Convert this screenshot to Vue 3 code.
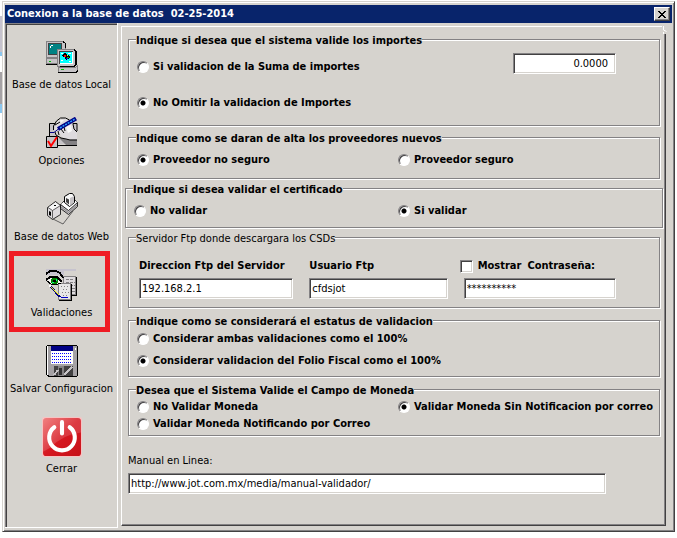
<template>
  <div class="desktop">
    <div class="behind"></div>
    <div class="window">
      <header class="titlebar">
        <h1>Conexion a la base de datos&nbsp; 02-25-2014</h1>
        <button type="button" class="close" aria-label="Cerrar ventana">
          <svg viewBox="0 0 8 7" width="8" height="7" shape-rendering="crispEdges">
            <path d="M0 0h2v1h1v1h2V1h1V0h2v1H7v1H6v1H5v1h1v1h1v1h1v1H6V6H5V5H3v1H2v1H0V6h1V5h1V4h1V3H2V2H1V1H0z" />
          </svg>
        </button>
      </header>

      <div class="content">
        <nav class="sidebar">
          <button v-for="item in menu" :key="item.id" type="button" class="menu-item"
            :class="[item.id, { active: section === item.id }]" @click="section = item.id">
            <!-- computadoras -->
            <svg v-if="item.id === 'local'" class="icon" viewBox="0 0 32 32" shape-rendering="crispEdges">
              <path fill="#c6c3c6" stroke="#848284" d="M.5.5h17l2 2v14h-19z" />
              <path fill="#424142" d="M2 2h14v12H2z" />
              <path fill="#008284" d="M3 3h12v10H3z" />
              <path fill="#fff" d="M5 4h2v1H5zM4 5h1v2H4z" />
              <path fill="#c6c3c6" stroke="#848284" d="M.5 17.500h14v5H.5z" />
              <path fill="#000" d="M0 23h12v1H0zM17 0h1v1h1v1h1v5h-1V2h-2z" />
              <path fill="#00c300" d="M3 20h2v1H3z" />
              <path fill="#c6c3c6" stroke="#848284" d="M11.500 8.500h17l2 2v13l-2 2h-17z" />
              <path fill="#000" d="M28 8h1v1h1v1h1v14h-1v1h-1v1H14v-1h14v-1h1V10h-1z" />
              <path fill="#424142" d="M13 10h14v13H13z" />
              <path fill="#fff" d="M14 22h13v1H14zM26 11h1v12h-1z" />
              <path fill="#00ffff" d="M14 11h12v11H14z" />
              <path fill="#fff" d="M15 19h2v1h-2zM23 20h2v1h-2zM15 12h2v1h-2zM22 12h3v1h-3z" />
              <path fill="#000" d="M17 13h1v-1h2v1h1v1h2v1h1v2h-1v1h-2v1h-1v-1h-1v-2h-2v-1h-1v-1h1z" />
              <path fill="#f00" d="M18 14h2v2h-2z" /><path fill="#00f" d="M20 17h2v1h-2z" />
              <path fill="#ff0" d="M21 14h1v1h-1z" /><path fill="#00c300" d="M21 16h2v1h-2z" />
              <path fill="#c6c3c6" stroke="#848284" d="M12.500 26.500h17l2-2v5l-2 2h-17z" />
              <path fill="#000" d="M12 31h18v-1h1v-1h1v2h-1v1H12z" />
              <path fill="#00c300" d="M15 28h3v1h-3z" />
            </svg>
            <!-- mano con pluma -->
            <svg v-else-if="item.id === 'opciones'" class="icon" viewBox="0 0 32 32">
              <path fill="#c6c3c6" stroke="#000" d="M10 6.500H3.500V20M26 6.500h5V14" />
              <path fill="#c6c3c6" d="M4 7h6v13H4zM26 7h4v7h-4zM11 21h20v6H11z" />
              <path fill="#848284" d="M12 20l10 3h9v5H20z" />
              <path fill="#000" d="M12 28h19v1H12z" />
              <path fill="#dedbde" d="M8 13l1-6 4-4 5-2 6 2 3 4 1 6 3 2v7h-9l-6-2-4-5z" />
              <path fill="none" stroke="#000" d="M7.500 13V9l3-5 4-3h5l4 2M27 7l1 5 3 3M9 15l1 3 5 3 5 1 4 1h7" />
              <path fill="none" stroke="#000" d="M12 14l1 4M15 12l3 4M18 10l1 4M9 8l5-3" />
              <path fill="#f7f7f7" d="M20 10l5-2 1 6-4 2zM14 3h4l-3 3z" />
              <path stroke="#000084" stroke-width="4" d="M12 12L30 1.500" />
              <path stroke="#29a2ff" stroke-width="1.500" stroke-dasharray="2 1" d="M14 11L29 2" />
              <path stroke="#000084" d="M4 15.500h4l5-4" fill="none" />
              <path fill="#c6c3c6" stroke="#000" d="M.5 19.500h11v11H.5z" />
              <path fill="none" stroke="#f00" stroke-width="2" d="M2 24l3 5 6-9" />
            </svg>
            <!-- equipos enlazados -->
            <svg v-else-if="item.id === 'web'" class="icon" viewBox="0 0 32 32">
              <path fill="#dedbde" stroke="#000" stroke-width=".8" d="M1.500 14.500l8-6 5 4v9l-8 5-5-4z" />
              <path fill="#f7f7f7" d="M2.500 14.500l7-5 4 3-7 4.500z" />
              <path fill="none" stroke="#424142" stroke-width=".8" d="M6.500 17.500v8M2 14.500l4.500 3 8-5" />
              <path fill="#000" d="M3 18l2 1v4l-2-1zM8 12h2v1H8z" />
              <path fill="#c6c3c6" stroke="#000" stroke-width=".8" d="M14.500 11.500l4-4h11l2 2v4l-9 8-8-6z" />
              <path fill="#fff" d="M15 11l4-3h11l1 2-8.500 7.500z" />
              <path fill="none" stroke="#000" stroke-width=".8" d="M14.500 11.500l8 6 9-8" />
              <path fill="none" stroke="#848284" d="M15 14l7.500 5.500L31 12" />
              <path fill="#f7f7f7" stroke="#000" d="M18.500 3.500l5-3h3l2 3v6l-5 4-5-4z" />
              <path fill="#c6c3c6" d="M24 5l4-2v6l-4 4z" />
              <path fill="#424142" d="M20 5l3 1.500v5L20 9z" />
              <path fill="none" stroke="#424142" stroke-width=".8" d="M7 26l10 5 10-13" />
            </svg>
            <!-- ojo y documentos -->
            <svg v-else-if="item.id === 'validaciones'" class="icon" viewBox="0 0 32 32" shape-rendering="crispEdges">
              <path fill="#c6c3ce" d="M0 0h30v2H18v4H0z" />
              <path fill="#dedbde" stroke="#848284" d="M17.500 7.500h12v18h-12z" />
              <path fill="#000" d="M30 8h1v19h-6v-1h5z" />
              <path stroke="#848284" stroke-dasharray="3 1" d="M20 10.500h8M20 13.500h9M24 16.500h5M26 19.500h3M26 22.500h3" />
              <path fill="#e7e7e7" stroke="#848284" d="M12.500 14.500h12v16h-12z" />
              <path fill="#000" d="M25 15h1v17H13v-1h12z" />
              <path stroke="#848284" stroke-dasharray="1 2" d="M15 17.500h8M17 20.500h6M16 23.500h7M17 26.500h6" />
              <path fill="#f7f7f7" d="M1 12l4-3h6l5 4-4 2H5z" />
              <path fill="#008200" d="M6 9h5v1h1v4h-1v1H6v-1H5v-4h1z" />
              <path fill="#000" d="M7 11h3v2H7z" /><path fill="#00ff84" d="M10 10h1v2h-1zM6 13h2v1H6z" />
              <path fill="none" stroke="#000" stroke-width="2" d="M0 5l4-3h6l4 2 3 5M0 11l4-3h7l5 5" />
              <path fill="none" stroke="#000" d="M1 12l4 3h7l3-1" />
              <path stroke="#000084" stroke-width="2" d="M4 17l10 11" />
              <path stroke="#ffff00" d="M4 17l9 9" />
              <path fill="#fff" d="M3 16h2v2H3z" />
              <path fill="#0000c6" d="M15 28h7v1h-7z" />
            </svg>
            <!-- disquete -->
            <svg v-else-if="item.id === 'salvar'" class="icon" viewBox="0 0 32 32" shape-rendering="crispEdges">
              <path d="M1 0h30v1h1v30h-1v1H2v-1H1v-1H0V1h1z" />
              <path fill="#a5a2a5" d="M1 1h30v30H3v-1H1z" />
              <path fill="#000084" d="M5 1h22v5H5z" /><path fill="#fff" d="M5 6h22v13H5z" />
              <path stroke="#0000ff" stroke-dasharray="1 1" d="M6 8.500h20M6 11.500h20M6 14.500h20M6 17.500h20" />
              <path fill="#fff" d="M1 1h1v29H1zM29 3h1v2h-1z" />
              <path fill="#424142" d="M8 21h19v10H8z" />
              <path fill="#848284" d="M12 21h6v10h-6z" />
              <path fill="#313031" d="M13 23h3v7h-3z" />
              <path stroke="#c6c3c6" stroke-width="2" d="M8 30l4-5M18 30l8-8" />
            </svg>
            <!-- apagar -->
            <svg v-else class="icon" viewBox="0 0 39 39">
              <defs>
                <linearGradient id="power" x1="0" y1="0" x2="1" y2="1">
                  <stop offset="0" stop-color="#ef6b6b" /><stop offset=".5" stop-color="#d61821" />
                  <stop offset="1" stop-color="#c61018" />
                </linearGradient>
              </defs>
              <rect width="39" height="39" rx="2" fill="#f7c3c3" />
              <rect x="1" y="1" width="37" height="37" rx="3" fill="url(#power)" />
              <path fill="#fff" opacity=".15" d="M1 1h37v14Q20 17 8 30L1 34z" />
              <path fill="none" stroke="#fff" stroke-width="4" stroke-linecap="round"
                d="M12 10a12.500 12.500 0 1 0 15 0M19.500 5v11" />
            </svg>
            <span>{{ item.label }}</span>
          </button>
        </nav>

        <main class="panel">
          <svg class="grip" viewBox="0 0 6 8" width="6" height="8">
            <path fill="#d6d3ce" d="M0 0h6v8H0z" />
            <path fill="none" stroke="#fff" d="M1.500 0v4l3 1.500M1.500 8V6" />
          </svg>

          <fieldset class="group importes">
            <legend>Indique si desea que el sistema valide los importes</legend>
            <div class="importe-row">
              <label><input v-model="importes" type="radio" value="si" />Si validacion de la Suma de importes</label>
              <input v-model="monto" class="field monto" type="text" aria-label="Importe" />
            </div>
            <label><input v-model="importes" type="radio" value="no" />No Omitir la validacion de Importes</label>
          </fieldset>

          <fieldset class="group proveedores">
            <legend>Indique como se daran de alta los proveedores nuevos</legend>
            <div class="options">
              <label><input v-model="proveedor" type="radio" value="no" />Proveedor no seguro</label>
              <label><input v-model="proveedor" type="radio" value="si" />Proveedor seguro</label>
            </div>
          </fieldset>

          <fieldset class="group certificado">
            <legend>Indique si desea validar el certificado</legend>
            <div class="options">
              <label><input v-model="certificado" type="radio" value="no" />No validar</label>
              <label><input v-model="certificado" type="radio" value="si" />Si validar</label>
            </div>
          </fieldset>

          <fieldset class="group ftp">
            <legend>Servidor Ftp donde descargara los CSDs</legend>
            <div class="ftp-grid">
              <div class="ftp-col">
                <label for="servidor">Direccion Ftp del Servidor</label>
                <input id="servidor" v-model="servidor" class="field" type="text" />
              </div>
              <div class="ftp-col">
                <label for="usuario">Usuario Ftp</label>
                <input id="usuario" v-model="usuario" class="field" type="text" />
              </div>
              <div class="ftp-col">
                <div class="clave-row">
                  <label><input v-model="mostrar" type="checkbox" />Mostrar</label>
                  <label for="clave">Contraseña:</label>
                </div>
                <input id="clave" v-model="clave" class="field" type="text" />
              </div>
            </div>
          </fieldset>

          <fieldset class="group estatus">
            <legend>Indique como se considerará el estatus de validacion</legend>
            <label><input v-model="estatus" type="radio" value="ambas" />Considerar ambas validaciones como el 100%</label>
            <label><input v-model="estatus" type="radio" value="folio" />Considerar validacion del Folio Fiscal como el 100%</label>
          </fieldset>

          <fieldset class="group moneda">
            <legend>Desea que el Sistema Valide el Campo de Moneda</legend>
            <div class="options">
              <label><input v-model="moneda" type="radio" value="no" />No Validar Moneda</label>
              <label><input v-model="moneda" type="radio" value="sin" />Validar Moneda Sin Notificacion por correo</label>
              <label><input v-model="moneda" type="radio" value="con" />Validar Moneda Notificando por Correo</label>
            </div>
          </fieldset>

          <div class="manual">
            <label for="manual">Manual en Linea:</label>
            <input id="manual" v-model="manual" class="field" type="text" />
          </div>
        </main>
      </div>
    </div>
  </div>
</template>

<script setup>
import { ref } from 'vue'

const menu = [
  { id: 'local', label: 'Base de datos Local' },
  { id: 'opciones', label: 'Opciones' },
  { id: 'web', label: 'Base de datos Web' },
  { id: 'validaciones', label: 'Validaciones' },
  { id: 'salvar', label: 'Salvar Configuracion' },
  { id: 'cerrar', label: 'Cerrar' }
]

const section = ref('validaciones')
const importes = ref('no')
const monto = ref('0.0000')
const proveedor = ref('no')
const certificado = ref('si')
const servidor = ref('192.168.2.1')
const usuario = ref('cfdsjot')
const mostrar = ref(false)
const clave = ref('**********')
const estatus = ref('folio')
const moneda = ref('sin')
const manual = ref('http://www.jot.com.mx/media/manual-validador/')
</script>

<style>
body {
  margin: 0;
  background: #fff;
}
</style>

<style scoped>
* {
  box-sizing: border-box;
}
.desktop {
  position: relative;
  padding: 1px 2px 6px;
  font: 11px/14px "DejaVu Sans Condensed", "Liberation Sans", sans-serif;
  color: #000;
}
/* borde de la ventana que queda detras */
.behind {
  position: absolute;
  left: 0;
  top: 16px;
  width: 2px;
  height: 97px;
  background: linear-gradient(#c6c3ce 36px, #8cc7ef 36px 40px, #fff 40px 56px, #a5a2a5 56px 88px, #8cc7ef 88px);
}
.window {
  background: #d6d3ce;
  border: 1px solid;
  border-color: #d6d3ce #424142 #424142 #d6d3ce;
  box-shadow: inset 1px 1px #fff, inset -1px -1px #848284;
  padding: 3px 2px;
}
.titlebar {
  display: flex;
  align-items: center;
  justify-content: space-between;
  height: 18px;
  padding: 0 2px;
  background: #08246b;
  color: #fff;
}
.titlebar h1 {
  margin: 0;
  font-size: 11px;
  font-weight: bold;
}
.close {
  display: flex;
  align-items: center;
  justify-content: center;
  width: 16px;
  height: 14px;
  padding: 0;
  background: #d6d3ce;
  border: 1px solid;
  border-color: #fff #424142 #424142 #fff;
  box-shadow: inset -1px -1px #848284;
}
.content {
  display: flex;
  gap: 3px;
}
.sidebar {
  display: flex;
  flex-direction: column;
  flex: 0 0 113px;
  padding: 12px 1px 0 2px;
  border-right: 1px solid #fff;
  border-bottom: 1px solid #fff;
  box-shadow: inset 1px 1px #848284, inset 2px 2px #424142;
}
.menu-item {
  position: relative;
  display: flex;
  flex-direction: column;
  align-items: center;
  gap: 5px;
  height: 76px;
  padding: 6px 0 0;
  border: 0;
  background: none;
  font: inherit;
  color: inherit;
  white-space: nowrap;
}
.icon {
  width: 32px;
  height: 32px;
}
.cerrar {
  padding-top: 2px;
}
.cerrar .icon {
  width: 40px;
  height: 40px;
}
.menu-item.active::after {
  content: "";
  position: absolute;
  top: -12px;
  right: 6px;
  bottom: 7px;
  left: 2px;
  border: 5px solid #ef1c24;
}
.panel {
  position: relative;
  flex: 1;
  min-width: 0;
  margin: 3px 6px 2px 0;
  padding: 12px 5px 31px 6px;
  border: 1px solid;
  border-color: #fff #424142 #424142 #fff;
  box-shadow: inset -1px -1px #848284;
}
.grip {
  position: absolute;
  top: -1px;
  right: -3px;
}
.group {
  display: flex;
  flex-direction: column;
  min-width: 0;
  margin: 0 0 11px;
  padding: 0 0 0 8px;
  border: 1px solid #848284;
  box-shadow: 1px 1px #fff, inset 1px 1px #fff;
  font-weight: bold;
}
.group legend {
  float: left;
  align-self: flex-start;
  margin-top: -6px;
  margin-left: -1px;
  padding: 0;
  background: #d6d3ce;
}
.group label {
  display: flex;
  align-items: center;
  white-space: nowrap;
}
.options {
  display: grid;
  grid-template-columns: 1fr 1fr;
  row-gap: 3px;
}
.importes {
  padding-bottom: 15px;
}
.importe-row {
  display: flex;
  align-items: flex-end;
  justify-content: space-between;
  margin: 5px 43px 22px 0;
}
.proveedores {
  margin-bottom: 9px;
}
.proveedores .options {
  padding: 7px 0 11px;
}
.certificado {
  margin: 0 -3px 9px;
}
.certificado .options {
  padding: 7px 0 9px;
}
.ftp {
  margin-bottom: 12px;
  padding-bottom: 8px;
}
.ftp legend {
  font-weight: normal;
}
.ftp-grid {
  display: grid;
  grid-template-columns: 154fr 138fr 152fr;
  column-gap: 16px;
  margin: 13px 43px 0 2px;
}
.ftp-col {
  display: flex;
  flex-direction: column;
  gap: 5px;
  min-width: 0;
}
.clave-row {
  display: flex;
  gap: 6px;
  margin-left: -4px;
}
.estatus {
  margin-bottom: 12px;
  padding-bottom: 4px;
}
.estatus label {
  margin: 4px 0;
}
.estatus legend + label {
  margin-top: 3px;
}
.moneda {
  margin-bottom: 18px;
}
.moneda .options {
  padding: 2px 0 4px;
}
.manual {
  display: flex;
  flex-direction: column;
  gap: 5px;
  margin-right: 54px;
}
.field {
  width: 100%;
  height: 21px;
  padding: 0 2px;
  border: 1px solid;
  border-color: #848284 #fff #fff #848284;
  border-radius: 0;
  box-shadow: inset 1px 1px #424142, inset -1px -1px #d6d3ce;
  background: #fff;
  font: inherit;
  font-weight: normal;
  color: #000;
  outline: none;
}
.monto {
  width: 103px;
  padding-right: 7px;
  text-align: right;
}
input[type="radio"] {
  appearance: none;
  width: 12px;
  height: 12px;
  margin: 0 4px 0 0;
  border: 1px solid;
  border-color: #848284 #fff #fff #848284;
  border-radius: 50%;
  box-shadow: inset 1px 1px #424142;
  background: #fff;
}
input[type="radio"]:checked {
  background: radial-gradient(circle, #000 2px, #fff 3px);
}
input[type="checkbox"] {
  appearance: none;
  width: 13px;
  height: 13px;
  margin: 0 5px 0 0;
  border: 1px solid;
  border-color: #848284 #fff #fff #848284;
  box-shadow: inset 1px 1px #424142, inset -1px -1px #d6d3ce;
  background: #fff;
}
</style>
